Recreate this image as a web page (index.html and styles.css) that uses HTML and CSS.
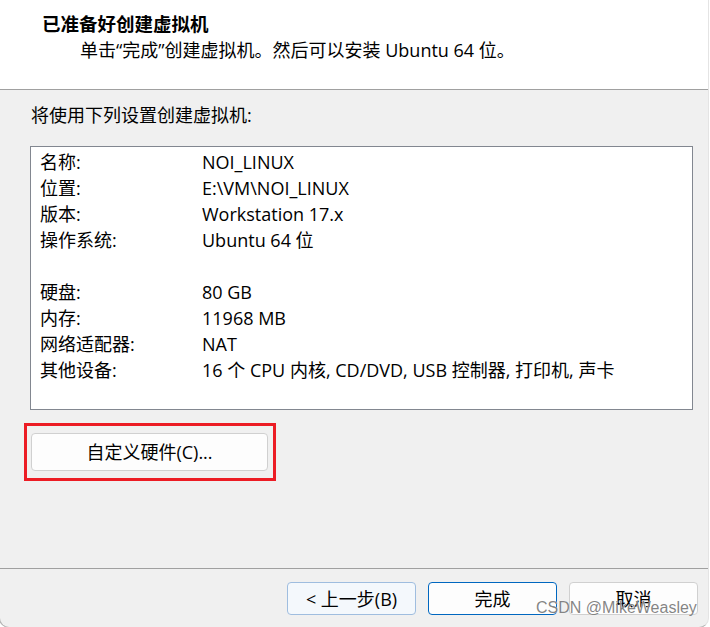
FILE: index.html
```html
<!DOCTYPE html>
<html lang="zh-CN">
<head>
<meta charset="utf-8">
<title>新建虚拟机向导</title>
<link rel="stylesheet" href="styles.css">
</head>
<body>
<div class="window">
  <header class="header">
    <div class="title">已准备好创建虚拟机</div>
    <div class="subtitle">单击“完成”创建虚拟机。然后可以安装 Ubuntu 64 位。</div>
  </header>
  <main class="content">
    <div class="intro">将使用下列设置创建虚拟机:</div>
    <div class="summary">
      <div class="row"><span class="label">名称:</span><span class="value">NOI_LINUX</span></div>
      <div class="row"><span class="label">位置:</span><span class="value">E:\VM\NOI_LINUX</span></div>
      <div class="row"><span class="label">版本:</span><span class="value">Workstation 17.x</span></div>
      <div class="row"><span class="label">操作系统:</span><span class="value">Ubuntu 64 位</span></div>
      <div class="row blank"></div>
      <div class="row"><span class="label">硬盘:</span><span class="value">80 GB</span></div>
      <div class="row"><span class="label">内存:</span><span class="value">11968 MB</span></div>
      <div class="row"><span class="label">网络适配器:</span><span class="value">NAT</span></div>
      <div class="row"><span class="label">其他设备:</span><span class="value">16 个 CPU 内核, CD/DVD, USB 控制器, 打印机, 声卡</span></div>
    </div>
    <div class="highlight">
      <button class="btn custom">自定义硬件(C)...</button>
    </div>
  </main>
  <footer class="footer">
    <button class="btn nav back">&lt; 上一步(B)</button>
    <button class="btn nav finish">完成</button>
    <button class="btn nav cancel">取消</button>
  </footer>
  <div class="watermark">CSDN @MikeWeasley</div>
</div>
</body>
</html>
```

FILE: styles.css
```css
* { box-sizing: border-box; }

html, body {
  margin: 0;
  padding: 0;
  background: #ffffff;
}

body {
  font-family: "Open Sans", "Noto Sans CJK SC", sans-serif;
  font-size: 18px;
  color: #000;
  overflow: hidden;
}

.window {
  position: relative;
  width: 710px;
  height: 628px;
  margin-left: -1px;
  background: #f0f0f0;
  border: 1px solid #b4b4b4;
  border-top: none;
  border-right-color: #e4e4e4;
  border-radius: 0 0 10px 10px;
  overflow: hidden;
  display: flex;
  flex-direction: column;
}

.header {
  height: 90px;
  flex: none;
  background: #ffffff;
  border-bottom: 1px solid #a0a0a0;
  padding-top: 11px;
}

.title {
  padding-left: 42px;
  font-size: 18.5px;
  font-weight: bold;
  line-height: 24px;
  font-family: "Noto Sans CJK SC", sans-serif;
}

.subtitle {
  margin-top: 3px;
  padding-left: 80px;
  line-height: 24px;
}

.content {
  flex: 1;
  padding: 13px 0 0 30px;
  border-bottom: 1px solid #a0a0a0;
}

.intro {
  line-height: 24px;
  padding-left: 1px;
}

.summary {
  margin-top: 19px;
  width: 663px;
  height: 264px;
  background: #ffffff;
  border: 1px solid #828790;
  padding: 2px 0 0 9px;
}

.row {
  display: flex;
  height: 26px;
  line-height: 26px;
  white-space: nowrap;
}

.label {
  width: 162px;
  flex: none;
}

.highlight {
  margin: 13px 0 0 -6px;
  width: 252px;
  height: 58px;
  border: 3px solid #ec1c24;
  padding: 7px 5px 0 4px;
}

.btn {
  font-family: "Open Sans", "Noto Sans CJK SC", sans-serif;
  font-size: 18px;
  color: #000;
  background: #fdfdfd;
  border: 1px solid #d0d0d0;
  border-radius: 4px;
  padding: 0;
  margin: 0;
  line-height: 1;
}

.custom {
  display: block;
  width: 237px;
  height: 38px;
}

.footer {
  height: 58px;
  flex: none;
  display: flex;
  justify-content: flex-end;
  gap: 12px;
  padding: 13px 10px 0 0;
}

.nav {
  width: 129px;
  height: 33px;
}

.back {
  background: #f4f8fc;
  border-color: #9fbddf;
}

.finish {
  border-color: #0067c0;
}

.watermark {
  position: absolute;
  left: 536px;
  top: 598px;
  font-family: "Liberation Sans", Arial, sans-serif;
  font-size: 16px;
  line-height: 20px;
  color: rgba(110, 110, 110, 0.85);
  text-shadow: 0 0 1px #fff;
  pointer-events: none;
}
```
